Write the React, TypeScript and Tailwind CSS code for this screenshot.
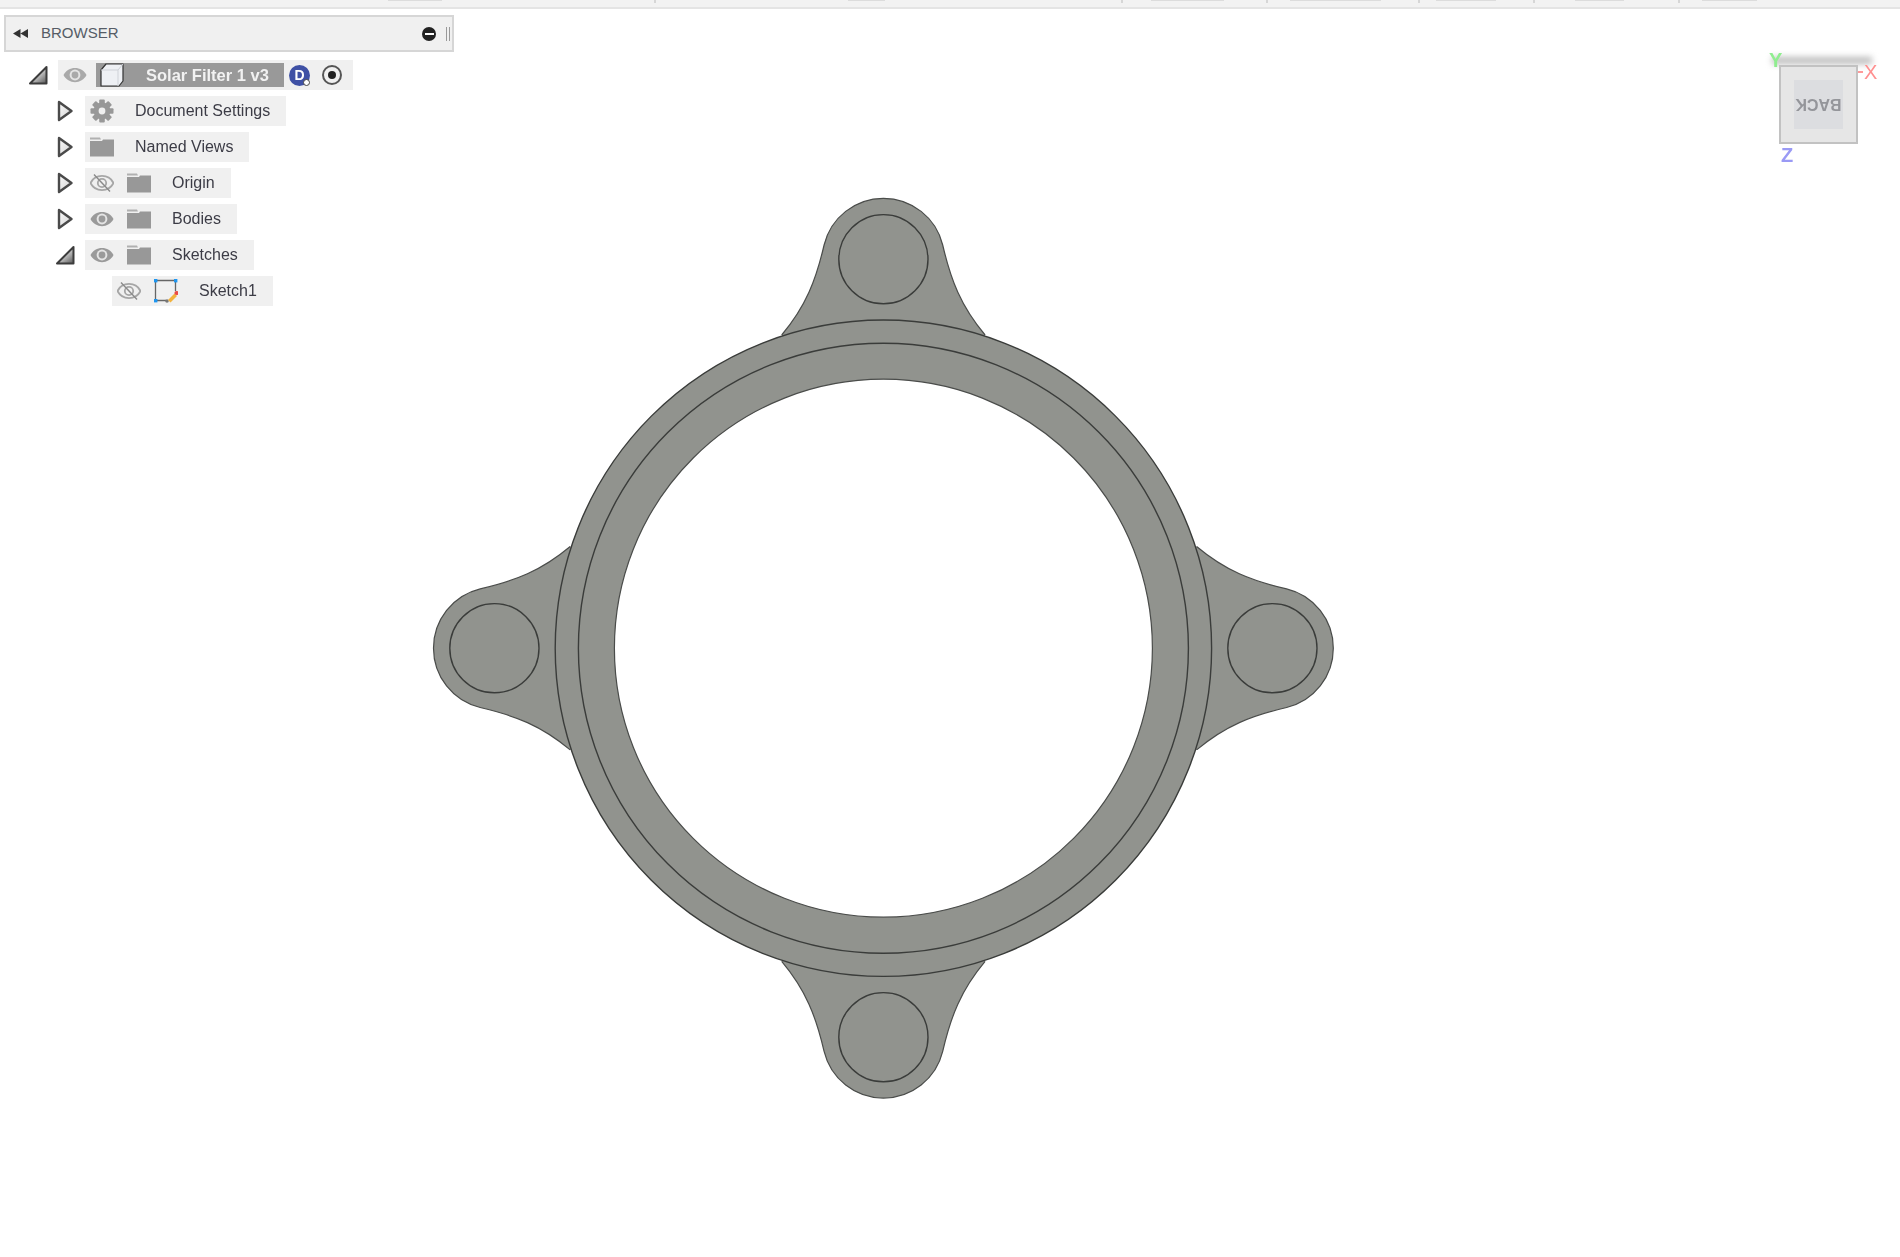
const font = "font-['Liberation_Sans',Arial,sans-serif]";

function Arrow({ open }: { open?: boolean }) {
  return (
    <svg width="20" height="24" viewBox="0 0 20 24" className="shrink-0">
      <defs>
        <linearGradient id="arrowOpen" x1="0.3" y1="0.2" x2="1" y2="1">
          <stop offset="0" stopColor="#ffffff" />
          <stop offset="1" stopColor="#555555" />
        </linearGradient>
        <linearGradient id="arrowClosed" x1="0" y1="0" x2="1" y2="1">
          <stop offset="0" stopColor="#fafafa" />
          <stop offset="1" stopColor="#d4d4d4" />
        </linearGradient>
      </defs>
      {open ? (
        <path d="M2 20.5 L18.5 4 V20.5 Z" fill="url(#arrowOpen)" stroke="#3c3c3c" strokeWidth="2" strokeLinejoin="round" />
      ) : (
        <path d="M4 3 L16.5 12 L4 21 Z" fill="url(#arrowClosed)" stroke="#4a4a4a" strokeWidth="2.4" strokeLinejoin="round" />
      )}
    </svg>
  );
}

function EyeIcon({ off, tone = '#9a9a9a' }: { off?: boolean; tone?: string }) {
  const almond = 'M0.5 9 C5 -0.5 19 -0.5 23.5 9 C19 18.5 5 18.5 0.5 9 Z';
  if (off) {
    return (
      <svg width="24" height="18" viewBox="0 0 24 18" className="shrink-0">
        <path d={almond} fill="none" stroke="#a6a6a6" strokeWidth="1.8" />
        <circle cx="12" cy="9" r="4.2" fill="none" stroke="#a6a6a6" strokeWidth="1.8" />
        <path d="M4 0.5 L20 17.5" stroke="#8a8a8a" strokeWidth="1.4" />
      </svg>
    );
  }
  return (
    <svg width="24" height="18" viewBox="0 0 24 18" className="shrink-0">
      <path d={almond} fill={tone} />
      <circle cx="12" cy="9" r="5.4" fill="#e4e4e4" />
      <circle cx="12" cy="9" r="3.4" fill={tone} />
    </svg>
  );
}

function Folder() {
  return (
    <svg width="24" height="20" viewBox="0 0 24 20" className="shrink-0">
      <path d="M0 0.5 H10 L11 2.5 H0 Z" fill="#b0b0b0" />
      <path d="M0 4 H12 L13 2.5 H24 V19.5 H0 Z" fill="#989898" />
    </svg>
  );
}

function Gear() {
  const teeth = [0, 45, 90, 135];
  return (
    <svg width="24" height="24" viewBox="0 0 24 24" className="shrink-0">
      {teeth.map((a) => (
        <rect key={a} x="9.2" y="0.5" width="5.6" height="23" rx="1" fill="#989898" transform={`rotate(${a} 12 12)`} />
      ))}
      <circle cx="12" cy="12" r="8.4" fill="#989898" />
      <circle cx="12" cy="12" r="3.4" fill="#f0f0f0" />
    </svg>
  );
}

function SketchIcon() {
  return (
    <svg width="24" height="24" viewBox="0 0 24 24" className="shrink-0">
      <path d="M3 1.5 H20 M21.5 3 V12 M1.5 3 V20 M3 21.5 H12" fill="none" stroke="#666" strokeWidth="1.3" />
      <rect x="0" y="0" width="3.4" height="3.4" fill="#1e96f0" />
      <rect x="20" y="0" width="3.4" height="3.4" fill="#1e96f0" />
      <rect x="0" y="20" width="3.4" height="3.4" fill="#1e96f0" />
      <circle cx="13" cy="22" r="1.8" fill="#777" />
      <path d="M14 21 L20.5 14.5 L23 17 L16.5 23.5 Z" fill="#f2b23c" />
      <circle cx="22.5" cy="14" r="2.1" fill="#ea4a45" />
    </svg>
  );
}

function Row({ indent, open, eye, icon, label }: { indent: string; open?: boolean; eye?: 'on' | 'off'; icon: React.ReactNode; label: string }) {
  return (
    <div className={`flex h-[36px] items-center ${indent}`}>
      {open !== undefined && (
        <div className="mr-[10px] flex w-[20px] justify-center">
          <Arrow open={open} />
        </div>
      )}
      <div className="flex h-[30px] items-center gap-[13px] bg-[#f0f0f0] pl-[5px] pr-[16px]">
        {eye && <EyeIcon off={eye === 'off'} />}
        {icon}
        <span className="ml-[8px] text-[16px] text-[#3c3c46]">{label}</span>
      </div>
    </div>
  );
}

function Browser() {
  return (
    <div className={`${font} ml-[4px] mt-[6px] w-[450px] blur-[0.4px]`}>
      <div className="flex h-[37px] items-center border-2 border-[#d6d6d6] bg-[#f0f0f0] pl-[7px] pr-[1px]">
        <svg width="15" height="9" viewBox="0 0 15 9" className="shrink-0">
          <path d="M7.5 0 L0 4.5 L7.5 9 Z M15 0 L7.5 4.5 L15 9 Z" fill="#333" />
        </svg>
        <span className="ml-[13px] text-[15px] text-[#555c66]">BROWSER</span>
        <div className="ml-auto flex h-[14px] w-[14px] items-center justify-center rounded-full bg-[#222]">
          <div className="h-[2px] w-[9px] bg-white" />
        </div>
        <div className="ml-[10px] mr-[1px] h-[14px] w-[4px] border-x border-[#999]" />
      </div>

      <div className="mt-[5px] flex h-[36px] items-center pl-[24px]">
        <Arrow open />
        <div className="ml-[10px] flex h-[30px] items-center bg-[#f0f0f0] pl-[5px] pr-[11px]">
          <EyeIcon tone="#a9a9a9" />
          <div className="ml-[9px] flex h-[24px] w-[188px] items-center bg-[#999999] pl-[4px]">
            <svg width="24" height="24" viewBox="0 0 24 24" className="shrink-0">
              <path d="M1 7 L6 1 H23 V18 L19 23 H1 Z" fill="#eef0f4" stroke="#333" strokeWidth="1.2" strokeLinejoin="round" />
              <path d="M1 7 H18 L23 1 M18 7 V23" fill="none" stroke="#cfd2d8" strokeWidth="1" />
            </svg>
            <span className="ml-[22px] whitespace-nowrap text-[16.5px] font-bold text-[#f2f2f2]">Solar Filter 1 v3</span>
          </div>
          <div className="relative ml-[5px] flex h-[21px] w-[21px] items-center justify-center rounded-full bg-[#3f51a5] text-[14px] font-bold text-white">
            D
            <span className="absolute bottom-0 right-0 h-[7px] w-[7px] rounded-full border border-[#444] bg-white" />
          </div>
          <div className="ml-[12px] flex h-[20px] w-[20px] items-center justify-center rounded-full border-2 border-[#555]">
            <div className="h-[8px] w-[8px] rounded-full bg-[#222]" />
          </div>
        </div>
      </div>

      <Row indent="pl-[51px]" open={false} icon={<Gear />} label="Document Settings" />
      <Row indent="pl-[51px]" open={false} icon={<Folder />} label="Named Views" />
      <Row indent="pl-[51px]" open={false} eye="off" icon={<Folder />} label="Origin" />
      <Row indent="pl-[51px]" open={false} eye="on" icon={<Folder />} label="Bodies" />
      <Row indent="pl-[51px]" open eye="on" icon={<Folder />} label="Sketches" />
      <Row indent="pl-[108px]" eye="off" icon={<SketchIcon />} label="Sketch1" />
    </div>
  );
}

function ViewCube() {
  return (
    <div className={`${font} absolute right-0 top-[44px] h-[124px] w-[130px] blur-[0.5px]`}>
      <div className="absolute left-[2px] top-[13px] h-[7px] w-[100px] bg-[#bcbcbc] blur-[3px]" />
      <div className="absolute left-[9px] top-[21px] flex h-[79px] w-[79px] items-center justify-center border-2 border-[#c2c2c2] bg-[#e6e6e6]">
        <div className="flex h-[49px] w-[49px] rotate-180 items-center justify-center bg-[#dcdde0] text-[16px] font-bold text-[#94959a]">BACK</div>
      </div>
      <span className="absolute left-[-1px] top-[6px] text-[20px] font-bold leading-none text-[#90ee90]">Y</span>
      <div className="absolute left-[88px] top-[27px] h-[2px] w-[5px] bg-[#ff9a9a]" />
      <span className="absolute left-[94px] top-[18px] text-[20px] leading-none text-[#ff9090]">X</span>
      <span className="absolute left-[11px] top-[101px] text-[20px] font-bold leading-none text-[#9a9af5]">Z</span>
    </div>
  );
}

function Part() {
  const cx = 883.4;
  const cy = 648.2;
  const ear = 'M781.7 335 C806 306 816 280 824.1 245 A61 61 0 0 1 942.7 245 C950.8 280 960.8 306 985.1 335';
  return (
    <svg width="1900" height="1257" viewBox="0 0 1900 1257" className="absolute left-0 top-0 blur-[0.4px]">
      {[0, 90, 180, 270].map((a) => (
        <g key={a} transform={`rotate(${a} ${cx} ${cy})`}>
          <path d={`${ear} L${cx} ${cy} Z`} fill="#91938e" stroke="none" />
          <path d={ear} fill="none" stroke="#4a4c4a" strokeWidth="1.2" />
          <circle cx={cx} cy={259.2} r="44.6" fill="#91938e" stroke="#3a3c3a" strokeWidth="1.4" />
        </g>
      ))}
      <circle cx={cx} cy={cy} r="328.2" fill="#91938e" stroke="#3a3c3a" strokeWidth="1.4" />
      <circle cx={cx} cy={cy} r="305" fill="#91938e" stroke="#3a3c3a" strokeWidth="1.4" />
      <circle cx={cx} cy={cy} r="269" fill="#ffffff" stroke="#4a4c4a" strokeWidth="1.2" />
    </svg>
  );
}

// toolbar is cut off by the capture, only the bottoms of its labels and dividers show
function TopBar() {
  return (
    <div className="relative flex h-[9px] items-start border-b-2 border-[#e4e4e4] bg-[#f2f2f2] blur-[0.4px]">
      <div className="ml-[388px] h-px w-[54px] bg-[#dcdcdc]" />
      <div className="ml-[212px] h-[3px] w-[2px] bg-[#d6d6d6]" />
      <div className="ml-[192px] h-px w-[37px] bg-[#dcdcdc]" />
      <div className="ml-[236px] h-[3px] w-[2px] bg-[#d6d6d6]" />
      <div className="ml-[28px] h-px w-[73px] bg-[#dcdcdc]" />
      <div className="ml-[42px] h-[3px] w-[2px] bg-[#d6d6d6]" />
      <div className="ml-[22px] h-px w-[91px] bg-[#dcdcdc]" />
      <div className="ml-[37px] h-[3px] w-[2px] bg-[#d6d6d6]" />
      <div className="ml-[16px] h-px w-[60px] bg-[#dcdcdc]" />
      <div className="ml-[37px] h-[3px] w-[2px] bg-[#d6d6d6]" />
      <div className="ml-[40px] h-px w-[49px] bg-[#dcdcdc]" />
      <div className="ml-[54px] h-[3px] w-[2px] bg-[#d6d6d6]" />
      <div className="ml-[22px] h-px w-[55px] bg-[#dcdcdc]" />
    </div>
  );
}

export default function App() {
  return (
    <div className="relative h-[1257px] w-[1900px] overflow-hidden bg-white">
      <Part />
      <TopBar />
      <div className="relative">
        <Browser />
      </div>
      <ViewCube />
    </div>
  );
}
